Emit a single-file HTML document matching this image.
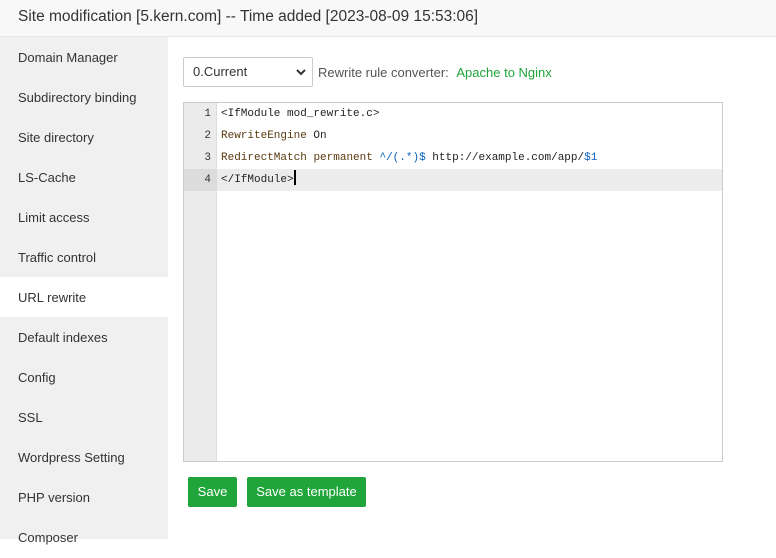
<!DOCTYPE html>
<html><head><style>
*{margin:0;padding:0;box-sizing:border-box}
body{width:776px;height:539px;overflow:hidden;background:#fff;font-family:"Liberation Sans",sans-serif;font-size:13px;color:#333;position:relative}
.hd{position:absolute;left:0;top:0;width:776px;height:37px;background:#f8f8f8;border-bottom:1px solid #e8e8e8;font-size:15.5px;line-height:34px;padding-left:18px;color:#333}
.sb{position:absolute;left:0;top:37px;width:168px;height:502px;background:#f0f0f0}
.sb div{height:40px;line-height:41px;padding-left:18px;font-size:13px;color:#333}
.sb .on{background:#fff}
.sel{position:absolute;left:183px;top:57px;width:130px;height:30px;border:1px solid #ccc;border-radius:2px;line-height:28px;padding-left:9px;font-size:13px;background:#fff}
.sel svg{position:absolute;right:6px;top:10px}
.lbl{position:absolute;left:318px;top:65px;font-size:13px;color:#555}
.lbl b{font-weight:normal;color:#20a53a;margin-left:4px}
.ed{position:absolute;left:183px;top:102px;width:540px;height:360px;border:1px solid #ccc;background:#fff;font-family:"Liberation Mono",monospace;font-size:11px}
.gut{position:absolute;left:0;top:0;width:33px;height:358px;background:#ebebeb;border-right:1px solid #ddd}
.ln{position:absolute;left:0;width:538px;height:22px;line-height:22px}
.ln .n{position:absolute;left:0;width:27px;text-align:right;color:#333}
.ln .t{position:absolute;left:37px;color:#222;white-space:pre}
.hl{background:#ececec}
.kw{color:#222}.at{color:#5a3a10}.bl{color:#0b5fb8}
.cur{display:inline-block;width:2px;height:15px;background:#000;vertical-align:-3px}
.btn{position:absolute;top:477px;height:30px;background:#20a53a;color:#fff;border-radius:2px;line-height:30px;text-align:center;font-size:13px}
</style></head><body>
<div class="hd">Site modification [5.kern.com] -- Time added [2023-08-09 15:53:06]</div>
<div class="sb">
<div>Domain Manager</div><div>Subdirectory binding</div><div>Site directory</div><div>LS-Cache</div><div>Limit access</div><div>Traffic control</div><div class="on">URL rewrite</div><div>Default indexes</div><div>Config</div><div>SSL</div><div>Wordpress Setting</div><div>PHP version</div><div>Composer</div>
</div>
<div class="sel">0.Current<svg width="10" height="8" viewBox="0 0 10 8"><path d="M1 2l4 4 4-4" stroke="#333" stroke-width="2" fill="none"/></svg></div>
<div class="lbl">Rewrite rule converter: <b>Apache to Nginx</b></div>
<div class="ed">
<div class="gut"></div>
<div class="ln" style="top:0"><span class="n">1</span><span class="t"><span class="kw">&lt;IfModule</span> mod_rewrite.c<span class="kw">&gt;</span></span></div>
<div class="ln" style="top:22px"><span class="n">2</span><span class="t"><span class="at">RewriteEngine</span> On</span></div>
<div class="ln" style="top:44px"><span class="n">3</span><span class="t"><span class="at">RedirectMatch</span> <span class="at">permanent</span> <span class="bl">^/(.*)$</span> http://example.com/app/<span class="bl">$1</span></span></div>
<div class="ln hl" style="top:66px;left:0"><span class="n" style="background:#dcdcdc;width:33px;padding-right:6px">4</span><span class="t"><span class="kw">&lt;/IfModule&gt;</span><span class="cur"></span></span></div>
</div>
<div class="btn" style="left:188px;width:49px">Save</div>
<div class="btn" style="left:247px;width:119px">Save as template</div>
</body></html>
